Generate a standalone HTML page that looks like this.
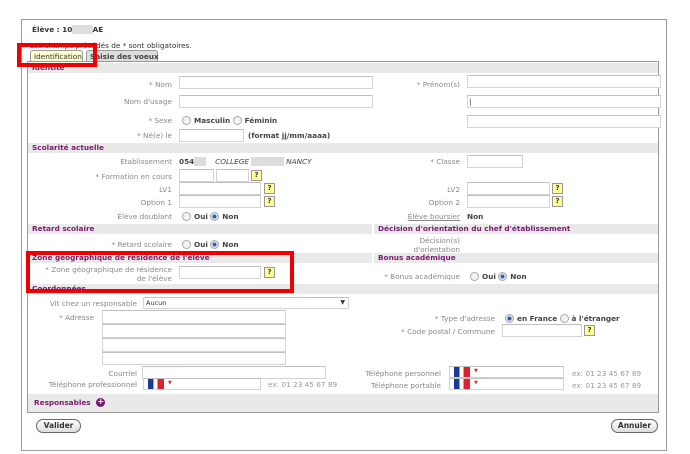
<!DOCTYPE html>
<html><head><meta charset="utf-8"><style>
*{box-sizing:border-box;margin:0;padding:0}
body{width:690px;height:454px;background:#fff;position:relative;overflow:hidden;font-family:"DejaVu Sans","Liberation Sans",sans-serif;font-size:7.3px;color:#333}
.a{position:absolute;white-space:nowrap}
.l{position:absolute;color:#888;text-align:right;white-space:nowrap}
.i{position:absolute;border:1px solid #d4d4d4;background:#fff;border-top-color:#c0c0c0}
.h{position:absolute;background:#e9e9e9;color:#7a1a6e;font-weight:bold;padding-left:4px;font-size:7.3px;line-height:10px}
.q{position:absolute;width:11px;height:11px;background:#ffff99;border:1px solid #999;font-weight:bold;font-size:7px;text-align:center;line-height:9px;color:#333}
.r{display:inline-block;width:9px;height:9px;border-radius:50%;border:1px solid #aaa;background:#f2f2f2;vertical-align:-2px;margin-right:3px}
.r.on{background:radial-gradient(circle,#2a5fb0 35%,#dde 45%)}
.b{font-weight:bold;color:#444}
.red{position:absolute;border:4px solid #ee0000}
.fl{position:absolute;width:16px;height:10px;top:0px;left:4px;background:linear-gradient(90deg,#1a3a9a 0 35%,#fff 35% 60%,#e02030 60%)}
.dd{position:absolute;left:24px;top:1px;color:#c33;font-size:5px}
.btn{position:absolute;border:1px solid #666;border-radius:8px;background:linear-gradient(#fff,#ddd);font-weight:bold;font-size:7.5px;text-align:center;line-height:12px;color:#333}
</style></head><body>
<div class="a" style="left:21px;top:19px;width:646px;height:432px;border:1px solid #999"></div>
<div class="a" style="left:32px;top:25px;font-weight:bold;color:#333">Élève : 10<span style="color:#ccc;background:#ddd">&nbsp;&nbsp;&nbsp;&nbsp;&nbsp;&nbsp;&nbsp;&nbsp;</span>AE</div>
<div class="a" style="left:30px;top:41px;color:#333">Les champs précédés de * sont obligatoires.</div>
<div class="a" style="left:30px;top:50px;width:53px;height:12px;background:#ffffd0;border:1px solid #999;border-bottom:none;border-radius:3px 3px 0 0;padding:1px 3px;color:#333">Identification</div>
<div class="a" style="left:86px;top:50px;width:72px;height:12px;background:#ddd;border:1px solid #999;border-bottom:none;border-radius:3px 3px 0 0;padding:1px 3px;color:#444;font-weight:bold">Saisie des voeux</div>
<div class="a" style="left:27px;top:61px;width:632px;height:352px;border:1px solid #999"></div>
<div class="h" style="left:28px;top:63px;width:630px">Identité</div>
<div class="l" style="right:518px;top:80px">* Nom</div><div class="i" style="left:179px;top:76px;width:194px;height:13px"></div>
<div class="l" style="right:230px;top:80px">* Prénom(s)</div><div class="i" style="left:467px;top:75px;width:194px;height:13px"></div>
<div class="l" style="right:518px;top:97px">Nom d'usage</div><div class="i" style="left:179px;top:95px;width:194px;height:13px"></div>
<div class="i" style="left:467px;top:95px;width:194px;height:13px"></div><div class="a" style="left:469px;top:97px;color:#333">|</div>
<div class="l" style="right:518px;top:116px">* Sexe</div>
<div class="a" style="left:182px;top:116px" ><span class="r"></span><span class="b">Masculin</span> <span class="r"></span><span class="b">Féminin</span></div>
<div class="i" style="left:467px;top:115px;width:194px;height:13px"></div>
<div class="l" style="right:518px;top:131px">* Né(e) le</div><div class="i" style="left:179px;top:129px;width:65px;height:13px"></div>
<div class="a b" style="left:248px;top:131px">(format <u>jj</u>/mm/aaaa)</div>
<div class="h" style="left:28px;top:143px;width:630px">Scolarité actuelle</div>
<div class="l" style="right:518px;top:157px">Etablissement</div>
<div class="a" style="left:179px;top:157px"><b style="color:#444">054</b><span style="background:#ddd">&nbsp;&nbsp;&nbsp;&nbsp;&nbsp;</span>&nbsp;&nbsp;&nbsp;&nbsp;<i style="color:#444">COLLEGE</i> <span style="background:#ddd">&nbsp;&nbsp;&nbsp;&nbsp;&nbsp;&nbsp;&nbsp;&nbsp;&nbsp;&nbsp;&nbsp;&nbsp;&nbsp;&nbsp;</span> <i style="color:#444">NANCY</i></div>
<div class="l" style="right:230px;top:157px">* Classe</div><div class="i" style="left:467px;top:155px;width:56px;height:13px"></div>
<div class="l" style="right:518px;top:172px">* Formation en cours</div>
<div class="i" style="left:179px;top:169px;width:35px;height:13px"></div><div class="i" style="left:216px;top:169px;width:33px;height:13px"></div><div class="q" style="left:251px;top:170px">?</div>
<div class="l" style="right:518px;top:185px">LV1</div><div class="i" style="left:179px;top:182px;width:82px;height:13px"></div><div class="q" style="left:264px;top:183px">?</div>
<div class="l" style="right:230px;top:185px">LV2</div><div class="i" style="left:467px;top:182px;width:83px;height:13px"></div><div class="q" style="left:552px;top:183px">?</div>
<div class="l" style="right:518px;top:198px">Option 1</div><div class="i" style="left:179px;top:195px;width:82px;height:13px"></div><div class="q" style="left:264px;top:196px">?</div>
<div class="l" style="right:230px;top:198px">Option 2</div><div class="i" style="left:467px;top:195px;width:83px;height:13px"></div><div class="q" style="left:552px;top:196px">?</div>
<div class="l" style="right:518px;top:212px">Élève doublant</div>
<div class="a" style="left:182px;top:212px"><span class="r"></span><span class="b">Oui</span> <span class="r on"></span><span class="b">Non</span></div>
<div class="l" style="right:230px;top:212px;text-decoration:underline">Élève boursier</div><div class="a b" style="left:467px;top:212px">Non</div>
<div class="h" style="left:28px;top:224px;width:344px">Retard scolaire</div>
<div class="h" style="left:374px;top:224px;width:284px">Décision d'orientation du chef d'établissement</div>
<div class="l" style="right:518px;top:240px">* Retard scolaire</div>
<div class="a" style="left:182px;top:240px"><span class="r"></span><span class="b">Oui</span> <span class="r on"></span><span class="b">Non</span></div>
<div class="l" style="right:230px;top:236px;line-height:9px">Décision(s)<br>d'orientation</div>
<div class="h" style="left:28px;top:253px;width:344px">Zone géographique de résidence de l'élève</div>
<div class="h" style="left:374px;top:253px;width:284px">Bonus académique</div>
<div class="l" style="right:518px;top:265px;line-height:9px">* Zone géographique de résidence<br>de l'élève</div>
<div class="i" style="left:179px;top:266px;width:82px;height:13px"></div><div class="q" style="left:264px;top:267px">?</div>
<div class="l" style="right:230px;top:272px">* Bonus académique</div>
<div class="a" style="left:470px;top:272px"><span class="r"></span><span class="b">Oui</span> <span class="r on"></span><span class="b">Non</span></div>
<div class="h" style="left:28px;top:284px;width:630px">Coordonnées</div>
<div class="l" style="right:553px;top:299px">Vit chez un responsable</div>
<div class="i" style="left:143px;top:297px;width:206px;height:12px;color:#333;padding-left:2px;font-size:6.5px;line-height:10px">Aucun<span style="position:absolute;right:3px;top:0;font-size:6px">▼</span></div>
<div class="l" style="right:596px;top:313px">* Adresse</div>
<div class="i" style="left:102px;top:310px;width:184px;height:14px"></div>
<div class="i" style="left:102px;top:324px;width:184px;height:14px"></div>
<div class="i" style="left:102px;top:338px;width:184px;height:14px"></div>
<div class="i" style="left:102px;top:352px;width:184px;height:13px"></div>
<div class="l" style="right:195px;top:314px">* Type d'adresse</div>
<div class="a" style="left:505px;top:314px"><span class="r on"></span><span class="b">en France</span> <span class="r"></span><span class="b">à l'étranger</span></div>
<div class="l" style="right:195px;top:327px">* Code postal / Commune</div>
<div class="i" style="left:502px;top:324px;width:80px;height:13px"></div><div class="q" style="left:584px;top:325px">?</div>
<div class="l" style="right:553px;top:369px">Courriel</div><div class="i" style="left:142px;top:366px;width:184px;height:13px"></div>
<div class="l" style="right:553px;top:380px">Téléphone professionnel</div>
<div class="i" style="left:143px;top:378px;width:118px;height:12px"><div class="fl"></div><span class="dd">▼</span></div>
<div class="a" style="left:268px;top:380px;color:#999">ex: 01 23 45 67 89</div>
<div class="l" style="right:249px;top:369px">Téléphone personnel</div>
<div class="i" style="left:449px;top:366px;width:115px;height:12px"><div class="fl"></div><span class="dd">▼</span></div>
<div class="a" style="left:572px;top:369px;color:#999">ex: 01 23 45 67 89</div>
<div class="l" style="right:249px;top:381px">Téléphone portable</div>
<div class="i" style="left:449px;top:378px;width:115px;height:12px"><div class="fl"></div><span class="dd">▼</span></div>
<div class="a" style="left:572px;top:381px;color:#999">ex: 01 23 45 67 89</div>
<div class="h" style="left:28px;top:394px;width:630px;height:18px;line-height:18px;padding-left:6px">Responsables <span style="display:inline-block;width:9px;height:9px;border-radius:50%;background:#7a1a6e;color:#fff;font-size:8px;line-height:8px;text-align:center;vertical-align:1px;margin-left:3px">+</span></div>
<div class="btn" style="left:36px;top:419px;width:45px;height:14px">Valider</div>
<div class="btn" style="left:611px;top:419px;width:47px;height:14px">Annuler</div>
<div class="red" style="left:17px;top:43px;width:80px;height:24px"></div>
<div class="red" style="left:26px;top:251px;width:268px;height:42px"></div>
</body></html>
